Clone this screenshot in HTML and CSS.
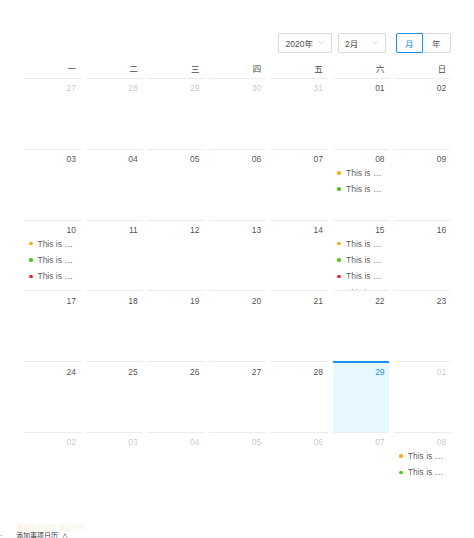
FILE: index.html
```html
<!DOCTYPE html>
<html lang="zh">
<head>
<meta charset="utf-8">
<title>Calendar</title>
<link rel="stylesheet" href="styles.css">
</head>
<body>
<div class="calendar">
  <div class="cal-header">
    <div class="select year"><span>2020年</span><svg class="arrow" viewBox="0 0 10 10"><path d="M1 3 L5 7 L9 3" fill="none" stroke="currentColor" stroke-width="0.9"/></svg></div>
    <div class="select month"><span>2月</span><svg class="arrow" viewBox="0 0 10 10"><path d="M1 3 L5 7 L9 3" fill="none" stroke="currentColor" stroke-width="0.9"/></svg></div>
    <div class="radio-group"><span class="radio active">月</span><span class="radio">年</span></div>
  </div>
  <div class="grid">
    <div class="wd">一</div><div class="wd">二</div><div class="wd">三</div><div class="wd">四</div><div class="wd">五</div><div class="wd">六</div><div class="wd">日</div>

    <div class="cell other"><div class="val">27</div><div class="content"></div></div>
    <div class="cell other"><div class="val">28</div><div class="content"></div></div>
    <div class="cell other"><div class="val">29</div><div class="content"></div></div>
    <div class="cell other"><div class="val">30</div><div class="content"></div></div>
    <div class="cell other"><div class="val">31</div><div class="content"></div></div>
    <div class="cell"><div class="val">01</div><div class="content"></div></div>
    <div class="cell"><div class="val">02</div><div class="content"></div></div>

    <div class="cell"><div class="val">03</div><div class="content"></div></div>
    <div class="cell"><div class="val">04</div><div class="content"></div></div>
    <div class="cell"><div class="val">05</div><div class="content"></div></div>
    <div class="cell"><div class="val">06</div><div class="content"></div></div>
    <div class="cell"><div class="val">07</div><div class="content"></div></div>
    <div class="cell"><div class="val">08</div><div class="content"><ul class="events">
      <li><i class="dot warning"></i><span class="txt">This is warning event.</span></li>
      <li><i class="dot success"></i><span class="txt">This is usual event.</span></li>
    </ul></div></div>
    <div class="cell"><div class="val">09</div><div class="content"></div></div>

    <div class="cell"><div class="val">10</div><div class="content"><ul class="events">
      <li><i class="dot warning"></i><span class="txt">This is warning event.</span></li>
      <li><i class="dot success"></i><span class="txt">This is usual event.</span></li>
      <li><i class="dot error"></i><span class="txt">This is error event.</span></li>
    </ul></div></div>
    <div class="cell"><div class="val">11</div><div class="content"></div></div>
    <div class="cell"><div class="val">12</div><div class="content"></div></div>
    <div class="cell"><div class="val">13</div><div class="content"></div></div>
    <div class="cell"><div class="val">14</div><div class="content"></div></div>
    <div class="cell"><div class="val">15</div><div class="content"><ul class="events">
      <li><i class="dot warning"></i><span class="txt">This is warning event</span></li>
      <li><i class="dot success"></i><span class="txt">This is very long usual event。。....</span></li>
      <li><i class="dot error"></i><span class="txt">This is error event 1.</span></li>
      <li><i class="dot error"></i><span class="txt">This is error event 2.</span></li>
    </ul></div></div>
    <div class="cell"><div class="val">16</div><div class="content"></div></div>

    <div class="cell"><div class="val">17</div><div class="content"></div></div>
    <div class="cell"><div class="val">18</div><div class="content"></div></div>
    <div class="cell"><div class="val">19</div><div class="content"></div></div>
    <div class="cell"><div class="val">20</div><div class="content"></div></div>
    <div class="cell"><div class="val">21</div><div class="content"></div></div>
    <div class="cell"><div class="val">22</div><div class="content"></div></div>
    <div class="cell"><div class="val">23</div><div class="content"></div></div>

    <div class="cell"><div class="val">24</div><div class="content"></div></div>
    <div class="cell"><div class="val">25</div><div class="content"></div></div>
    <div class="cell"><div class="val">26</div><div class="content"></div></div>
    <div class="cell"><div class="val">27</div><div class="content"></div></div>
    <div class="cell"><div class="val">28</div><div class="content"></div></div>
    <div class="cell today"><div class="val">29</div><div class="content"></div></div>
    <div class="cell other"><div class="val">01</div><div class="content"></div></div>

    <div class="cell other"><div class="val">02</div><div class="content"></div></div>
    <div class="cell other"><div class="val">03</div><div class="content"></div></div>
    <div class="cell other"><div class="val">04</div><div class="content"></div></div>
    <div class="cell other"><div class="val">05</div><div class="content"></div></div>
    <div class="cell other"><div class="val">06</div><div class="content"></div></div>
    <div class="cell other"><div class="val">07</div><div class="content"></div></div>
    <div class="cell other"><div class="val">08</div><div class="content"><ul class="events">
      <li><i class="dot warning"></i><span class="txt">This is warning event.</span></li>
      <li><i class="dot success"></i><span class="txt">This is usual event.</span></li>
    </ul></div></div>
  </div>
</div>
<div class="footer">
  <div class="faint">通知事项日历演示代码</div>
  <div class="note"><span class="mark">·</span><span>添加事项日历</span><span class="caret">∧</span></div>
</div>
</body>
</html>
```

FILE: styles.css
```css
html, body {
  margin: 0;
  padding: 0;
  background: #ffffff;
}

body {
  font-family: "Liberation Sans", "Noto Sans CJK SC", sans-serif;
  font-size: 8.5px;
  color: rgba(0, 0, 0, 0.7);
  overflow: hidden;
  height: 538px;
}

.calendar {
  margin-left: 21.6px;
  width: 432px;
  padding-top: 33px;
}

.cal-header {
  display: flex;
  justify-content: flex-end;
  align-items: center;
  padding-right: 3px;
  margin-bottom: 11px;
}

.select {
  box-sizing: border-box;
  height: 19.5px;
  border: 1px solid #d9d9d9;
  border-radius: 2px;
  display: flex;
  align-items: center;
  justify-content: space-between;
  padding: 0 6px 0 6.5px;
  color: rgba(0, 0, 0, 0.75);
  font-size: 8.5px;
}

.select.year {
  width: 54px;
}

.select.month {
  width: 48.5px;
  margin-left: 5.5px;
}

.arrow {
  width: 7px;
  height: 7px;
  color: #c4c4c4;
}

.radio-group {
  display: flex;
  margin-left: 9.5px;
  height: 19.5px;
}

.radio {
  box-sizing: border-box;
  height: 19.5px;
  width: 27.5px;
  display: flex;
  align-items: center;
  justify-content: center;
  border: 1px solid #d9d9d9;
  color: rgba(0, 0, 0, 0.7);
  font-size: 8.5px;
}

.radio:first-child {
  border-radius: 2px 0 0 2px;
}

.radio:last-child {
  border-left: none;
  border-radius: 0 2px 2px 0;
}

.radio.active {
  border-color: #1890ff;
  color: #1890ff;
}

.grid {
  display: grid;
  grid-template-columns: repeat(7, minmax(0, 1fr));
  grid-auto-rows: auto;
}

.wd {
  min-width: 0;
  text-align: right;
  line-height: 11px;
  padding: 0 7.3px 3.5px 0;
  color: #4a4a4a;
  font-size: 8.5px;
}

.cell {
  min-width: 0;
  box-sizing: border-box;
  height: 70.8px;
  margin: 0 2.4px;
  border-top: 1.5px solid #ececec;
  padding: 2.4px 4.9px 0;
  display: flex;
  flex-direction: column;
}

.val {
  text-align: right;
  line-height: 14.6px;
  height: 14.6px;
  color: rgba(0, 0, 0, 0.72);
  font-size: 8.5px;
}

.cell.other .val {
  color: rgba(0, 0, 0, 0.25);
}

.cell.today {
  background: #e6f7ff;
  border-top: 2px solid #1890ff;
  padding-top: 1.9px;
}

.cell.today .val {
  color: #1890ff;
}

.content {
  flex: 1;
  min-height: 0;
  overflow: hidden;
}

.events {
  list-style: none;
  margin: 0;
  padding: 0;
  display: flex;
  flex-direction: column;
  gap: 4.4px;
}

.events li {
  display: flex;
  align-items: center;
  min-width: 0;
  height: 12px;
  line-height: 12px;
  white-space: nowrap;
  overflow: hidden;
}

.dot {
  flex: none;
  width: 3.7px;
  height: 3.7px;
  border-radius: 50%;
  margin-right: 4.9px;
}

.dot.warning { background: #faad14; }
.dot.success { background: #52c41a; }
.dot.error { background: #f5222d; }

.txt {
  flex: 1;
  overflow: hidden;
  text-overflow: ellipsis;
  white-space: nowrap;
  min-width: 0;
  color: rgba(0, 0, 0, 0.68);
  font-size: 8.5px;
}

.footer {
  padding-top: 21px;
  padding-left: 16px;
  font-size: 7px;
}

.faint {
  color: #f8efdc;
  line-height: 8px;
}

.note {
  display: flex;
  align-items: center;
  gap: 4px;
  line-height: 8px;
  color: #333;
  margin-left: -16px;
}

.mark {
  width: 12px;
}

.caret {
  font-size: 6px;
}
```
